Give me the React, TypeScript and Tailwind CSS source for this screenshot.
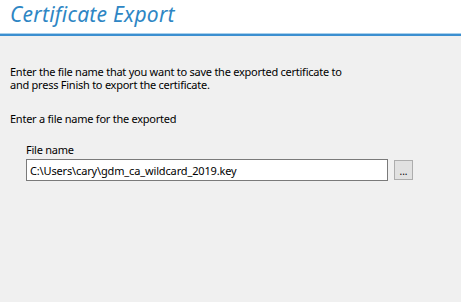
export default function App() {
  return (
    <div className="w-[461px] h-[302px] bg-[#f0f0f0] flex flex-col overflow-hidden" style={{ fontFamily: '"Noto Sans", "Open Sans", sans-serif' }}>
      <div className="h-[33px] bg-white flex items-start pl-[10px]">
        <div className="italic text-[21px] leading-[28px] text-[#2e86c4] tracking-[0.25px]">Certificate Export</div>
      </div>
      <div className="h-px bg-[#a8d0ec]" />
      <div className="h-[2px] bg-[#3b8fd0]" />
      <div className="flex flex-col pl-[10px] pt-[29px] text-[11px] leading-[13px] tracking-[-0.25px] text-black">
        <div className="leading-[13px]">Enter the file name that you want to save the exported certificate to</div>
        <div className="leading-[13px]">and press Finish to export the certificate.</div>
        <div className="mt-[21px]">Enter a file name for the exported</div>
        <div className="pl-[16px] mt-[18px]">File name</div>
        <div className="flex items-center gap-[6px] pl-[16px] mt-[3px]">
          <div className="w-[362px] h-[22px] bg-white border border-[#7a7a7a] flex items-center pl-[3px] tracking-[-0.15px]">C:\Users\cary\gdm_ca_wildcard_2019.key</div>
          <div className="w-[19px] h-[20px] bg-[#e1e1e1] border border-[#adadad] flex items-end justify-center pb-[3px] text-[10px] leading-[10px] tracking-normal">...</div>
        </div>
      </div>
    </div>
  );
}
